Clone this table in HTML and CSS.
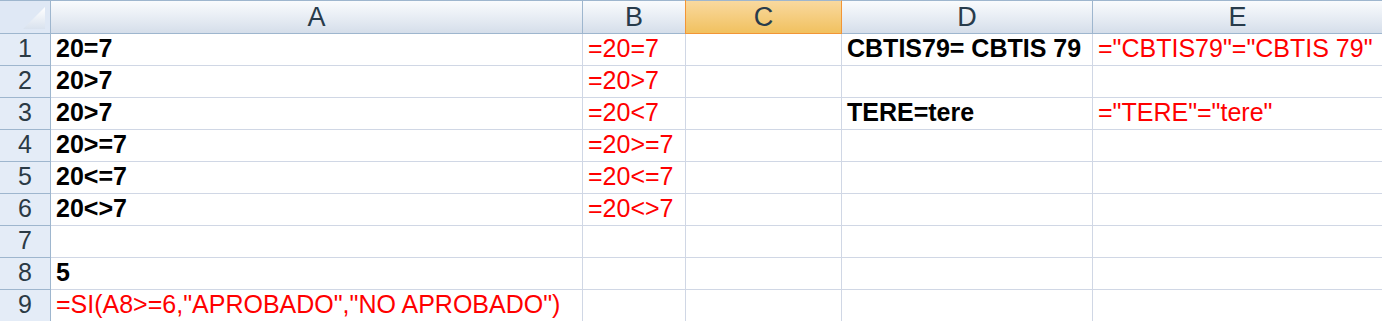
FILE: index.html
```html
<!DOCTYPE html>
<html>
<head>
<meta charset="utf-8">
<link rel="stylesheet" href="styles.css">
</head>
<body>
<div class="sheet">
  <div class="corner"><svg class="corner-tri" width="22" height="22" viewBox="0 0 22 22"><defs><linearGradient id="tg" x1="0" y1="0" x2="0" y2="1"><stop offset="0" stop-color="#ffffff"/><stop offset="1" stop-color="#d9e2ee"/></linearGradient></defs><polygon points="22,0 22,22 0,22" fill="url(#tg)"/></svg></div>
  <div class="colhead">A</div>
  <div class="colhead">B</div>
  <div class="colhead sel">C</div>
  <div class="colhead">D</div>
  <div class="colhead last">E</div>

  <div class="rowhead">1</div><div class="cell b">20=7</div><div class="cell r">=20=7</div><div class="cell"></div><div class="cell b">CBTIS79= CBTIS 79</div><div class="cell r">="CBTIS79"="CBTIS 79"</div>
  <div class="rowhead">2</div><div class="cell b">20&gt;7</div><div class="cell r">=20&gt;7</div><div class="cell"></div><div class="cell"></div><div class="cell"></div>
  <div class="rowhead">3</div><div class="cell b">20&gt;7</div><div class="cell r">=20&lt;7</div><div class="cell"></div><div class="cell b">TERE=tere</div><div class="cell r">="TERE"="tere"</div>
  <div class="rowhead">4</div><div class="cell b">20&gt;=7</div><div class="cell r">=20&gt;=7</div><div class="cell"></div><div class="cell"></div><div class="cell"></div>
  <div class="rowhead">5</div><div class="cell b">20&lt;=7</div><div class="cell r">=20&lt;=7</div><div class="cell"></div><div class="cell"></div><div class="cell"></div>
  <div class="rowhead">6</div><div class="cell b">20&lt;&gt;7</div><div class="cell r">=20&lt;&gt;7</div><div class="cell"></div><div class="cell"></div><div class="cell"></div>
  <div class="rowhead">7</div><div class="cell"></div><div class="cell"></div><div class="cell"></div><div class="cell"></div><div class="cell"></div>
  <div class="rowhead">8</div><div class="cell b">5</div><div class="cell"></div><div class="cell"></div><div class="cell"></div><div class="cell"></div>
  <div class="rowhead">9</div><div class="cell r">=SI(A8&gt;=6,"APROBADO","NO APROBADO")</div><div class="cell"></div><div class="cell"></div><div class="cell"></div><div class="cell"></div>
</div>
</body>
</html>
```

FILE: styles.css
```css
html, body {
  margin: 0;
  padding: 0;
  background: #ffffff;
}
.sheet {
  display: grid;
  grid-template-columns: 51px 532px 103px 156px 251px 1fr;
  grid-template-rows: 34px repeat(9, 32px);
  width: 1382px;
  height: 321px;
  overflow: hidden;
  font-family: "Liberation Sans", Arial, sans-serif;
}
.corner {
  box-sizing: border-box;
  border-top: 1px solid #9eb6ce;
  border-right: 1px solid #9eb6ce;
  border-bottom: 1px solid #9eb6ce;
  background: #dfe8f5;
  display: flex;
  align-items: flex-end;
  justify-content: flex-end;
  padding: 0 5px 4px 0;
}
.corner-tri { display: block; }
.colhead {
  box-sizing: border-box;
  border-top: 1px solid #9eb6ce;
  border-right: 1px solid #9eb6ce;
  border-bottom: 1px solid #9eb6ce;
  background: linear-gradient(#f9fbfd, #e4eaf2 60%, #d5deea);
  color: #283b4b;
  font-size: 27px;
  display: flex;
  align-items: center;
  justify-content: center;
  padding-top: 1px;
}
.colhead.last { border-right: none; }
.colhead.sel {
  background: linear-gradient(#f9d99f, #f1c15f);
  border-right-color: #f29536;
  border-bottom-color: #f29536;
  box-shadow: -1px 0 0 #f29536;
}
.rowhead {
  box-sizing: border-box;
  border-right: 1px solid #9eb6ce;
  border-bottom: 1px solid #9eb6ce;
  background: #e4ecf7;
  color: #2b3a45;
  font-size: 25px;
  display: flex;
  align-items: flex-end;
  justify-content: center;
  padding-bottom: 4px;
  line-height: 1;
}
.cell {
  box-sizing: border-box;
  border-right: 1px solid #d0d7e5;
  border-bottom: 1px solid #d0d7e5;
  font-size: 25px;
  line-height: 1;
  display: flex;
  align-items: flex-end;
  padding: 0 0 4px 5px;
  white-space: nowrap;
  overflow: visible;
}
.cell:nth-child(6n) { border-right: none; }
.cell.b { font-weight: bold; color: #000000; }
.cell.r { color: #ff0000; }
```
